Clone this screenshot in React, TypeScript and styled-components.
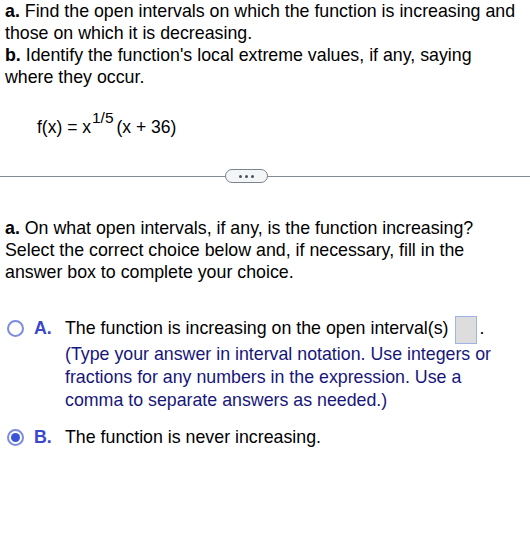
import React from "react";
import styled, { createGlobalStyle } from "styled-components";

const Global = createGlobalStyle`
  html, body { margin: 0; padding: 0; background: #fff; }
  body { font-family: "Liberation Sans", Arial, sans-serif; color: #000; }
`;

const Page = styled.div`
  width: 530px;
  height: 553px;
  display: flex;
  flex-direction: column;
  overflow: hidden;
`;

const Para = styled.p`
  margin: 0;
  padding: 0 9px 0 5px;
  font-size: 17.8px;
  line-height: 22px;
`;

const Label = styled.b`
  font-weight: bold;
`;

const Formula = styled.div`
  margin-top: 10px;
  padding-left: 37px;
  font-size: 17.5px;
  line-height: 22px;
  height: 40px;
  display: flex;
  align-items: flex-end;
`;

const Sup = styled.sup`
  font-size: 15.5px;
  vertical-align: 0.65em;
  line-height: 0;
  margin: 0 3px 0 1px;
`;

const Divider = styled.div`
  margin-top: 31px;
  display: flex;
  align-items: center;
  height: 14px;
`;

const Rule = styled.div<{ $w?: number }>`
  height: 1px;
  background: #848b95;
  ${(p) => (p.$w ? `width: ${p.$w}px;` : "flex: 1;")}
`;

const Pill = styled.div`
  width: 41px;
  height: 12px;
  border: 1px solid #7b838e;
  border-radius: 7px;
  background: #f4f5f7;
  display: flex;
  align-items: center;
  justify-content: center;
  gap: 3px;
`;

const Dot = styled.span`
  width: 3px;
  height: 3px;
  border-radius: 50%;
  background: #4a525c;
`;

const Question = styled(Para)`
  margin-top: 34px;
`;

const Options = styled.div`
  margin-top: 34px;
  display: flex;
  flex-direction: column;
  gap: 14px;
`;

const Option = styled.div`
  display: grid;
  grid-template-columns: 29px 31px 1fr;
  padding-left: 5px;
  font-size: 17.8px;
  line-height: 23px;
`;

const RadioWrap = styled.div`
  height: 23px;
  display: flex;
  align-items: center;
  padding-left: 2px;
`;

const Radio = styled.span<{ $checked?: boolean }>`
  width: 13px;
  height: 13px;
  border-radius: 50%;
  border: 2px solid #7c8cde;
  box-sizing: content-box;
  display: flex;
  align-items: center;
  justify-content: center;
  &::after {
    content: "";
    display: ${(p) => (p.$checked ? "block" : "none")};
    width: 9px;
    height: 9px;
    border-radius: 50%;
    background: #3a54d6;
  }
`;

const Letter = styled.span`
  font-weight: bold;
  color: #3b48c8;
`;

const Body = styled.div`
  padding-right: 10px;
`;

const Main = styled.div`
  display: flex;
  align-items: center;
  height: 23px;
  white-space: nowrap;
`;

const Box = styled.span`
  display: inline-block;
  width: 20px;
  height: 26px;
  margin: 0 3px 0 6px;
  background: #dddddd;
  border: 1px solid #9eb3e6;
  position: relative;
  top: 1px;
`;

const Hint = styled.div`
  color: #17167a;
  margin-top: 3px;
`;

export default function App() {
  return (
    <Page>
      <Global />
      <Para>
        <Label>a.</Label> Find the open intervals on which the function is increasing and those on which it is decreasing.
        <br />
        <Label>b.</Label> Identify the function's local extreme values, if any, saying where they occur.
      </Para>
      <Formula>
        <span>
          f(x) = x<Sup>1/5</Sup>(x + 36)
        </span>
      </Formula>
      <Divider>
        <Rule $w={225} />
        <Pill>
          <Dot />
          <Dot />
          <Dot />
        </Pill>
        <Rule />
      </Divider>
      <Question>
        <Label>a.</Label> On what open intervals, if any, is the function increasing? Select the correct choice below and, if necessary, fill in the answer box to complete your choice.
      </Question>
      <Options>
        <Option>
          <RadioWrap>
            <Radio />
          </RadioWrap>
          <Letter>A.</Letter>
          <Body>
            <Main>
              The function is increasing on the open interval(s)
              <Box />.
            </Main>
            <Hint>
              (Type your answer in interval notation. Use integers or fractions for any numbers in the expression. Use a comma to separate answers as needed.)
            </Hint>
          </Body>
        </Option>
        <Option>
          <RadioWrap>
            <Radio $checked />
          </RadioWrap>
          <Letter>B.</Letter>
          <Body>
            <Main>The function is never increasing.</Main>
          </Body>
        </Option>
      </Options>
    </Page>
  );
}
